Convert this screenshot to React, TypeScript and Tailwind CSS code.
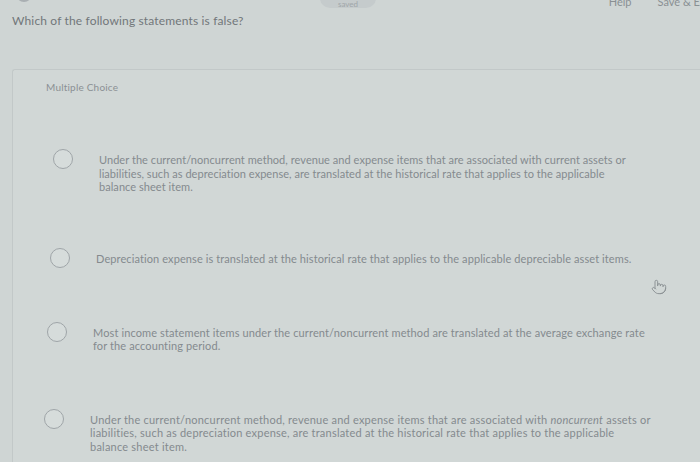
import { Pointer } from "lucide-react"
import type { ReactNode } from "react"

const options: { ml: string; mt: string; tr: string; lines: ReactNode[] }[] = [
  {
    ml: "ml-[40px]",
    mt: "mt-[60px]",
    tr: "tracking-[0.05px]",
    lines: [
      "Under the current/noncurrent method, revenue and expense items that are associated with current assets or",
      "liabilities, such as depreciation expense, are translated at the historical rate that applies to the applicable",
      "balance sheet item.",
    ],
  },
  {
    ml: "ml-[37px]",
    mt: "mt-[58px]",
    tr: "tracking-[0.1px]",
    lines: ["Depreciation expense is translated at the historical rate that applies to the applicable depreciable asset items."],
  },
  {
    ml: "ml-[34px]",
    mt: "mt-[58px]",
    tr: "tracking-[0.12px]",
    lines: [
      "Most income statement items under the current/noncurrent method are translated at the average exchange rate",
      "for the accounting period.",
    ],
  },
  {
    ml: "ml-[31px]",
    mt: "mt-[60px]",
    tr: "tracking-[0.22px]",
    lines: [
      <>
        Under the current/noncurrent method, revenue and expense items that are associated with <em>noncurrent</em> assets or
      </>,
      "liabilities, such as depreciation expense, are translated at the historical rate that applies to the applicable",
      "balance sheet item.",
    ],
  },
]

export default function App() {
  return (
    <div className="relative h-[462px] w-[700px] overflow-hidden bg-[#cfd5d4] font-['Lato',sans-serif] text-[#848a8e]">
      {/* Header strip (mostly cropped) */}
      <div className="flex h-[10px] items-end">
        <div className="ml-[16px] -mt-[14px] h-[16px] w-[16px] self-start rounded-full border-2 border-[#a9afb2] bg-[#c3c9ca]" />
        <div className="ml-[288px] -mt-[12px] flex h-[20px] w-[56px] items-end justify-center self-start rounded-full bg-[#c5cbcc] text-[8px] leading-[8px] text-[#a0a6a9]">
          saved
        </div>
        <div className="ml-auto flex gap-[26px] self-start -mt-[6px] text-[11px] text-[#8a9093]">
          <span>Help</span>
          <span className="-mr-[12px]">Save &amp; Exit</span>
        </div>
      </div>

      <p className="ml-[12px] mt-[3px] text-[12px] leading-[16px] tracking-[0.15px] text-[#72777a]">
        Which of the following statements is false?
      </p>

      {/* Question panel */}
      <div className="ml-[12px] mt-[40px] h-[400px] rounded-tl-[3px] border-l border-t border-[#c2c8c8] bg-[#d1d7d6]">
        <p className="ml-[33px] mt-[11px] text-[10px] leading-[12px] tracking-[0.2px] text-[#8b9094]">Multiple Choice</p>

        {options.map((o, i) => (
          <div key={i} className={`flex items-start gap-[26px] ${o.ml} ${o.mt}`}>
            <span className="mt-[-4px] h-[20px] w-[20px] shrink-0 rounded-full border border-[#9fa5a8] bg-[#d6dcdb]" />
            <div className={`whitespace-nowrap text-[11px] leading-[13.5px] ${o.tr}`}>
              {o.lines.map((l, j) => (
                <p key={j}>{l}</p>
              ))}
            </div>
          </div>
        ))}
      </div>

      <Pointer className="absolute left-[651px] top-[279px] h-[16px] w-[16px] text-[#8d9396]" strokeWidth={1.5} />
    </div>
  )
}
